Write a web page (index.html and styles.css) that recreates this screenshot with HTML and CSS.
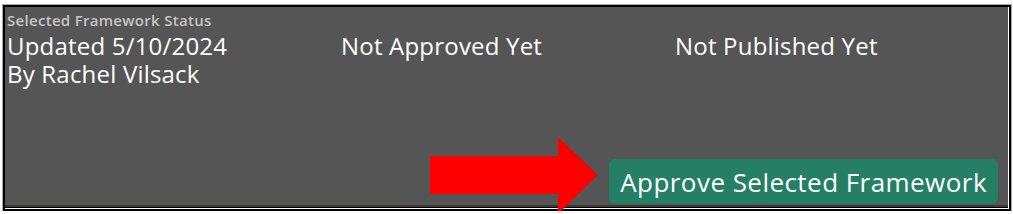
FILE: index.html
```html
<!DOCTYPE html>
<html lang="en">
  <head>
    <meta charset="UTF-8" />
    <meta name="viewport" content="width=device-width, initial-scale=1.0" />
    <title>Selected Framework Status</title>
    <link rel="stylesheet" href="styles.css">
  </head>
  <body>
    <div class="frame">
      <div class="status-panel">
        <div class="panel-title">Selected Framework Status</div>
        <div class="status-grid">
          <div class="status-col">
            <p>Updated 5/10/2024</p>
            <p>By Rachel Vilsack</p>
          </div>
          <div class="status-col">
            <p>Not Approved Yet</p>
          </div>
          <div class="status-col">
            <p>Not Published Yet</p>
          </div>
        </div>
        <button type="button" class="approve-btn">Approve Selected Framework</button>
      </div>
      <svg class="callout-arrow" width="170" height="78" viewBox="0 0 170 78">
        <polygon points="0,19 128,19 128,0 168,38 128,77 128,57 0,57" fill="#ff0000" />
      </svg>
    </div>
  </body>
</html>
```

FILE: styles.css
```css
* {
  margin: 0;
  padding: 0;
  box-sizing: border-box;
  font-family: "Open Sans", Lato, sans-serif;
}
body {
  background: white;
}
.frame {
  position: relative;
  margin: 5px 0 0 3px;
  width: 1008px;
  height: 206px;
  border: 2px solid #000;
  box-shadow: 0 0 0 1px #a8a8a8;
  background: white;
  padding: 0 1px 1px 0;
}
.status-panel {
  height: 100%;
  background: #555555;
  border-bottom: 1px solid #000;
  box-shadow: inset 0 -2px 0 #3d3a34;
  padding: 3px 0 0 2px;
  display: flex;
  flex-direction: column;
}
.panel-title {
  color: #c4c4c4;
  font-size: 15px;
  font-weight: 600;
  line-height: 20px;
  letter-spacing: 0.3px;
}
.status-grid {
  display: grid;
  grid-template-columns: 334px 334px 334px;
  margin-top: 2px;
  color: white;
}
.status-col p {
  font-size: 24px;
  font-weight: 500;
  line-height: 28px;
  letter-spacing: 0.2px;
}
.approve-btn {
  margin-top: auto;
  margin-right: 10px;
  margin-bottom: 3px;
  align-self: flex-end;
  height: 45px;
  padding: 0 11px;
  background: #247f65;
  color: white;
  border: none;
  border-radius: 6px;
  font-size: 26px;
  font-weight: 500;
  letter-spacing: 0.45px;
}
.callout-arrow {
  position: absolute;
  left: 425px;
  top: 130px;
}
```
